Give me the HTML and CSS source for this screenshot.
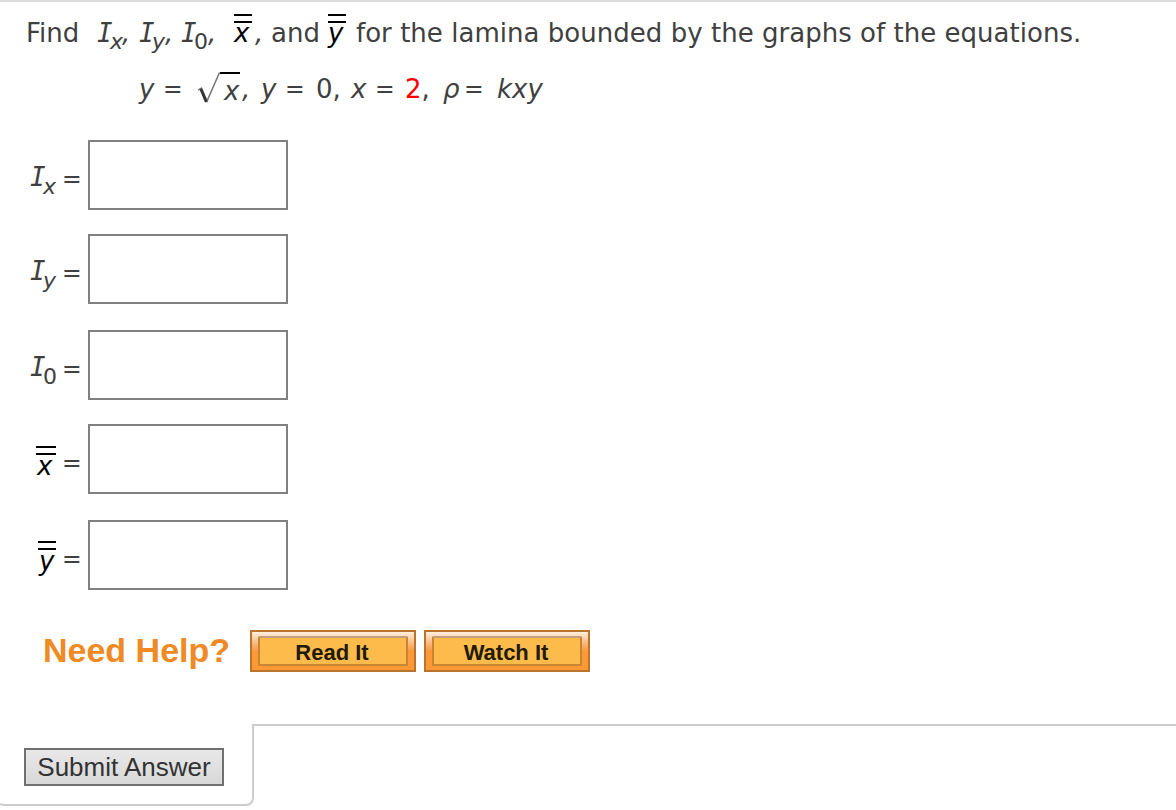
FILE: index.html
```
<!DOCTYPE html>
<html lang="en">
<head>
    <meta charset="UTF-8">
    <meta name="viewport" content="width=device-width, initial-scale=1.0">
    <title>Moments of Inertia</title>
    <link rel="stylesheet" href="styles.css">
</head>
<body>
    <div class="question">
        <p class="line prompt">
            <span>Find</span>
            <i class="cap">I</i><sub><i>x</i></sub><i>,</i>
            <i class="cap">I</i><sub><i>y</i></sub><i>,</i>
            <i class="cap">I</i><sub>0</sub><i>,</i>
            <i class="bars">x</i><i>,</i>
            <span>and</span>
            <i class="bars">y</i>
            <span class="rest">for the lamina bounded by the graphs of the equations.</span>
        </p>
        <p class="line equation">
            <i>y</i><span class="eq">=</span>
            <svg class="root" width="22" height="32" viewBox="0 0 22 32">
                <path d="M0 18 L3.5 16 L9 29 L21.5 0.5" fill="none" stroke="#777" stroke-width="1.5"/>
                <path d="M2.8 17 L8.3 30" stroke="#333" stroke-width="2.8"/>
            </svg>
            <i class="radicand">x</i><i>,</i>
            <i>y</i><span class="eq">=</span><span>0,</span>
            <i>x</i><span class="eq">=</span><span><span class="red">2</span>,</span>
            <i>ρ</i><span class="eq">=</span><i>kxy</i>
        </p>

        <div class="answers">
            <label class="answer"><i class="cap">I</i><sub><i>x</i></sub><span class="eq">=</span><input type="text"></label>
            <label class="answer"><i class="cap">I</i><sub><i>y</i></sub><span class="eq">=</span><input type="text"></label>
            <label class="answer"><i class="cap">I</i><sub>0</sub><span class="eq">=</span><input type="text"></label>
            <label class="answer mean mean-x"><i class="bars">x</i><span class="eq">=</span><input type="text"></label>
            <label class="answer mean mean-y"><i class="bars">y</i><span class="eq">=</span><input type="text"></label>
        </div>

        <div class="help">
            <span class="help-title">Need Help?</span>
            <button class="help-button"><span>Read It</span></button>
            <button class="help-button"><span>Watch It</span></button>
        </div>
    </div>

    <div class="footer">
        <div class="submit-box">
            <button class="submit">Submit Answer</button>
        </div>
        <div class="footer-rest"></div>
    </div>
</body>
</html>
```
FILE: styles.css
```
* {
    box-sizing: border-box;
}
body {
    margin: 0;
    height: 810px;
    overflow: hidden;
    background-color: #fff;
    color: #404040;
    font-family: Verdana, "DejaVu Sans", sans-serif;
    font-size: 26px;
    border-top: 2px solid #ddd;
}
.question {
    height: 722px;
}
.line {
    display: grid;
    align-items: baseline;
    margin: 0;
    line-height: 48px;
    white-space: pre;
}
.prompt {
    height: 56px;
    padding: 7px 0 0 26px;
    grid-template-columns: 71px 13px 12px 17px 13px 13px 16px 13px 14px 26px 21px 16px 57px 28px 1fr;
}
.rest {
    letter-spacing: 0.03px;
}
.equation {
    height: 56px;
    padding: 7px 0 0 139px;
    grid-template-columns: 24px 35px 22px 22px 19px 24px 31px 35px 24px 30px 38px 21px 33px 1fr;
}
.eq {
    position: relative;
    top: -1px;
    font-size: 23.5px;
}
.cap {
    font-family: "DejaVu Sans Mono", monospace;
    letter-spacing: -3px;
}
sub {
    position: relative;
    top: 7px;
    font-size: 22px;
    line-height: 1;
    vertical-align: baseline;
}
.bars {
    position: relative;
    color: #000;
}
.bars::before {
    content: "";
    position: absolute;
    left: 0;
    top: 5px;
    width: 18px;
    height: 5px;
    border-top: 2px solid #000;
    border-bottom: 2px solid #000;
}
.red {
    color: #f00;
}
.root {
    align-self: start;
    margin-top: 7px;
}
.radicand {
    position: relative;
    top: 2px;
    padding-left: 4px;
}
.radicand::before {
    content: "";
    position: absolute;
    left: 0;
    top: 5px;
    width: 20px;
    height: 2px;
    background-color: #000;
}
.answers {
    display: grid;
    grid-template-rows: 94px 96px 94px 96px 70px;
    padding: 26px 0 0 30px;
}
.answer {
    display: grid;
    grid-template-columns: 13px 19px 26px 200px;
    height: 70px;
    line-height: 75px;
}
.answer sub {
    top: 9px;
    line-height: 75px;
}
.answer .eq {
    top: 1px;
    padding-top: 1px;
}
.mean {
    grid-template-columns: 32px 26px 200px;
}
.mean .bars {
    padding: 5px 0 0 7px;
}
.mean-x .bars::before {
    left: 6px;
    top: 22px;
    width: 20px;
}
.mean-y .bars {
    padding: 4px 0 0 9px;
}
.mean-y .bars::before {
    left: 8px;
    top: 21px;
}
.answer input {
    width: 200px;
    height: 70px;
    padding: 0 10px;
    border: 2px solid #808080;
    background-color: #fff;
    font-size: 26px;
}
.help {
    display: flex;
    gap: 8px;
    padding: 40px 0 0 42px;
}
.help-title {
    width: 200px;
    padding-left: 1px;
    color: #f08a24;
    font: bold 34px/40px "Liberation Sans", Arial, sans-serif;
}
.help-button {
    width: 166px;
    height: 42px;
    padding: 4px 6px;
    border: 2px solid #b9752f;
    background: linear-gradient(#fff0df, #fbb87e 30%, #fb9a38 50%, #fb9935);
}
.help-button span {
    display: block;
    height: 30px;
    padding-right: 2px;
    border: 2px solid #c88534;
    border-top-color: #c3a080;
    border-radius: 2px;
    background-color: #fdbb4b;
    color: #221a08;
    font: bold 22px/29px "Liberation Sans", Arial, sans-serif;
}
.footer {
    display: flex;
}
.submit-box {
    width: 258px;
    height: 82px;
    margin-left: -4px;
    padding: 24px 0 0 28px;
    border: solid #ccc;
    border-width: 0 2px 2px 0;
    border-radius: 0 0 8px 8px;
}
.footer-rest {
    flex: 1;
    border-top: 2px solid #ccc;
    margin-left: -2px;
}
.submit {
    width: 200px;
    height: 38px;
    padding: 0;
    border: 2px solid #707070;
    background: linear-gradient(#e8e8e8, #d8d8d8);
    color: #333;
    font: 26px/34px "Liberation Sans", Arial, sans-serif;
}
```
